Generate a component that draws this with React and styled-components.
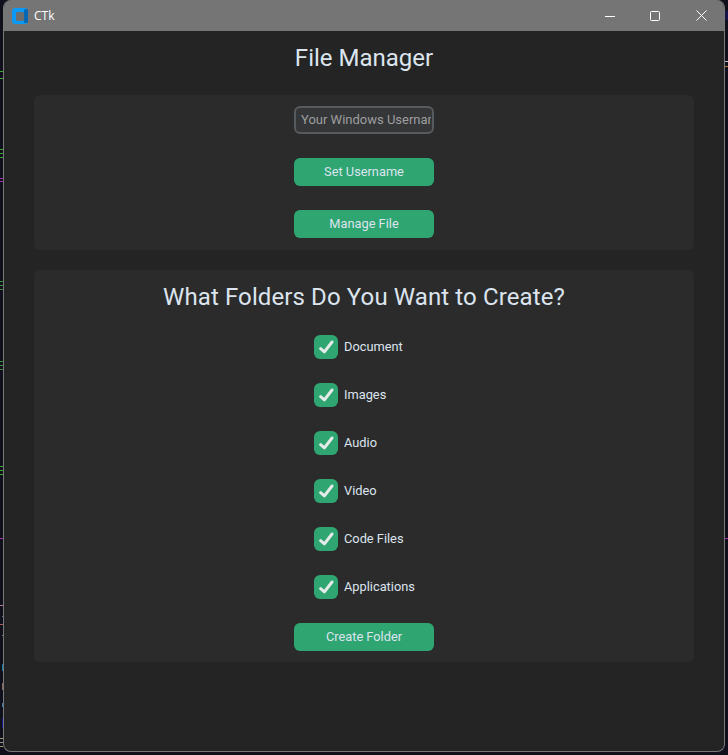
import React from 'react'
import styled, { createGlobalStyle } from 'styled-components'

const GlobalStyle = createGlobalStyle`
  html, body {
    margin: 0;
    padding: 0;
    height: 100%;
    background: #10101c;
    font-family: Roboto, "Liberation Sans", sans-serif;
    overflow: hidden;
  }
`
const Desktop = styled.div`
  position: relative;
  width: 728px;
  height: 755px;
  overflow: hidden;
`
// bits of the desktop behind the window that peek out at its edges
const Tick = styled.div`
  position: absolute;
  left: ${p => (p.$right ? '725px' : p.$block ? '2px' : '0')};
  width: ${p => (p.$block ? '1px' : '3px')};
  background: ${p => p.$color};
`
const Window = styled.div`
  position: relative;
  box-sizing: border-box;
  width: 722px;
  height: 752px;
  margin-left: 3px;
  border: 1px solid #77787a;
  border-top: 0;
  border-radius: 8px;
  background: #242424;
  overflow: hidden;
  display: flex;
  flex-direction: column;
`
const TitleBar = styled.div`
  flex: none;
  height: 31px;
  background: #757575;
  display: flex;
  align-items: center;
  padding-left: 8px;
`
const AppName = styled.span`
  margin-left: 6px;
  font: 12px "Open Sans", "Liberation Sans", sans-serif;
  color: #fff;
`
const WindowControls = styled.div`
  margin-left: auto;
  display: flex;
`
const ControlButton = styled.div`
  width: 46px;
  height: 31px;
  display: flex;
  align-items: center;
  justify-content: center;
`
const Content = styled.div`
  flex: 1;
  display: flex;
  flex-direction: column;
  align-items: center;
  padding-top: 11px;
`
const Heading = styled.h1`
  margin: 0;
  font-size: 24px;
  font-weight: 400;
  line-height: 32px;
  color: #dce4ee;
  text-align: center;
`
const Panel = styled.section`
  box-sizing: border-box;
  width: 660px;
  background: #2b2b2b;
  border-radius: 6px;
  display: flex;
  flex-direction: column;
  align-items: center;
  margin-top: ${p => p.$top}px;
  height: ${p => p.$height}px;
  padding-top: 11px;
`
const UsernameInput = styled.input`
  box-sizing: border-box;
  width: 140px;
  height: 28px;
  padding: 0 1px 2px 5px;
  background: #343638;
  border: 2px solid #565b5e;
  border-radius: 6px;
  font: 13px Roboto, sans-serif;
  color: #dce4ee;
  outline: none;
  &::placeholder {
    color: #9e9e9e;
    opacity: 1;
  }
`
const ActionButton = styled.button`
  display: block;
  box-sizing: border-box;
  flex: none;
  width: 140px;
  height: 28px;
  margin-top: 24px;
  padding: 0 0 2px;
  border: 0;
  border-radius: 6px;
  background: #2fa572;
  font: 12.8px Roboto, sans-serif;
  color: #dce4ee;
`
const PanelTitle = styled.h2`
  margin: 0;
  font-size: 24px;
  font-weight: 400;
  line-height: 32px;
  letter-spacing: 0.11px;
  color: #dce4ee;
`
const CheckList = styled.div`
  width: 100px;
  margin-top: 22px;
  display: flex;
  flex-direction: column;
  gap: 24px;
`
const CheckRow = styled.label`
  display: flex;
  align-items: center;
  gap: 6px;
  height: 24px;
  font-size: 12.8px;
  color: #dce4ee;
  white-space: nowrap;
`
const CheckLabel = styled.span`
  padding-bottom: 2px;
`
const CheckBox = styled.span`
  flex: none;
  width: 24px;
  height: 24px;
  border-radius: 6px;
  background: #2fa572;
  display: flex;
`

const folders = ['Document', 'Images', 'Audio', 'Video', 'Code Files', 'Applications']

const ticks = [
  [71, 1, '#3aa82e'], [78, 1, '#3aa82e'], [149, 1, '#3aa82e'], [153, 1, '#3aa82e'], [157, 1, '#3aa82e'],
  [178, 1, '#a02ca8'], [181, 1, '#a02ca8'],
  [281, 1, '#3a8a3e'], [285, 1, '#3a8a3e'], [289, 1, '#3a8a3e'],
  [361, 1, '#3a8a3e'], [365, 1, '#3a8a3e'], [369, 1, '#3a8a3e'],
  [466, 1, '#3aa82e'], [470, 1, '#3aa82e'], [474, 1, '#3aa82e'],
  [538, 1, '#a02ca8'], [605, 1, '#b08080'], [624, 1, '#b06060'],
  [738, 1, '#a09a70'], [742, 1, '#a09a70'], [746, 1, '#a09a70'],
]
const blocks = [
  [616, 1, '#5a6a9a'], [635, 1, '#7a7a8a'],
  [664, 7, '#0e7f9e'], [683, 7, '#8a6a5a'], [703, 4, '#3a7aaa'], [718, 10, '#141490'],
]
const rightTicks = [
  [11, 9, '#14144a'], [61, 1, '#c0c0c0'], [66, 1, '#b08040'], [538, 1, '#a02ca8'],
]

function AppLogo() {
  return (
    <svg width="16" height="16" viewBox="0 0 16 16">
      <rect x="0" y="0" width="16" height="16" rx="3.5" fill="#0a9af5" />
      <rect x="12" y="1" width="4" height="14" rx="1.5" fill="#0768b5" />
      <rect x="4" y="4" width="8" height="9" rx="1.5" fill="#6e6e6e" />
    </svg>
  )
}

function CheckMark() {
  return (
    <svg width="24" height="24" viewBox="0 0 24 24">
      <path d="M6.6 13.6 L10.4 16.8 L18 7" fill="none" stroke="#e6ebe9" strokeWidth="3" strokeLinecap="round" strokeLinejoin="round" />
    </svg>
  )
}

export default function App() {
  return (
    <Desktop>
      <GlobalStyle />
      {ticks.map(([y, h, color]) => (
        <Tick key={y} $color={color} style={{ top: y, height: h }} />
      ))}
      {blocks.map(([y, h, color]) => (
        <Tick key={y} $block $color={color} style={{ top: y, height: h }} />
      ))}
      {rightTicks.map(([y, h, color]) => (
        <Tick key={y} $right $color={color} style={{ top: y, height: h }} />
      ))}
      <Window>
        <TitleBar>
          <AppLogo />
          <AppName>CTk</AppName>
          <WindowControls>
            <ControlButton>
              <svg width="12" height="10" viewBox="0 0 12 10"><path d="M2 5.5H12" stroke="#fff" /></svg>
            </ControlButton>
            <ControlButton>
              <svg width="10" height="10" viewBox="0 0 10 10"><rect x="0.5" y="0.5" width="9" height="9" rx="1" fill="none" stroke="#fff" /></svg>
            </ControlButton>
            <ControlButton>
              <svg width="11" height="11" viewBox="0 0 11 11"><path d="M0.5 0.5L10.5 10.5M10.5 0.5L0.5 10.5" stroke="#fff" /></svg>
            </ControlButton>
          </WindowControls>
        </TitleBar>
        <Content>
          <Heading>File Manager</Heading>
          <Panel $top={21} $height={155}>
            <UsernameInput placeholder="Your Windows Username" readOnly />
            <ActionButton>Set Username</ActionButton>
            <ActionButton>Manage File</ActionButton>
          </Panel>
          <Panel $top={20} $height={392}>
            <PanelTitle>What Folders Do You Want to Create?</PanelTitle>
            <CheckList>
              {folders.map(name => (
                <CheckRow key={name}>
                  <CheckBox><CheckMark /></CheckBox>
                  <CheckLabel>{name}</CheckLabel>
                </CheckRow>
              ))}
            </CheckList>
            <ActionButton>Create Folder</ActionButton>
          </Panel>
        </Content>
      </Window>
    </Desktop>
  )
}
